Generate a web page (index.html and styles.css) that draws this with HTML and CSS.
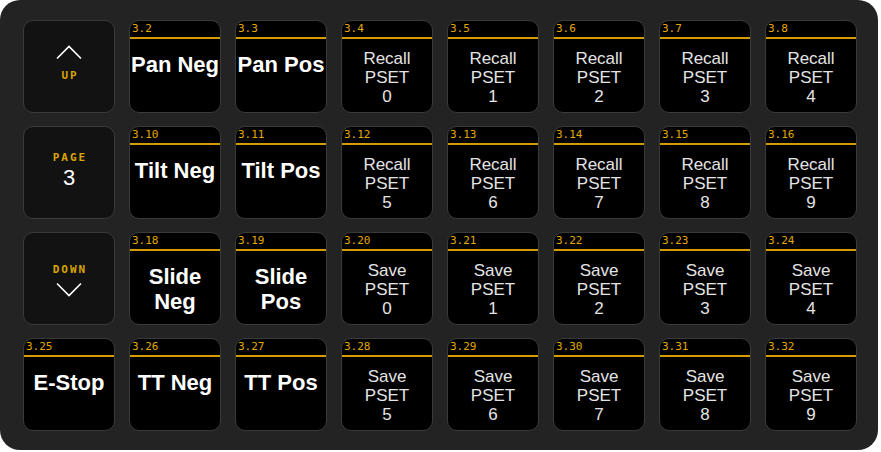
FILE: index.html
```html
<!DOCTYPE html>
<html>
<head>
<meta charset="utf-8">
<link rel="stylesheet" href="styles.css">
</head>
<body>
<div class="panel">
  <div class="key nav nav-up">
    <svg class="chev" width="26" height="15" viewBox="0 0 26 15"><polyline points="1,13.5 13,1.5 25,13.5" fill="none" stroke="#ffffff" stroke-width="1.6"/></svg>
    <span class="nav-label up-label">UP</span>
  </div>
  <div class="key"><div class="hdr">3.2</div><div class="body bold">Pan Neg</div></div>
  <div class="key"><div class="hdr">3.3</div><div class="body bold">Pan Pos</div></div>
  <div class="key"><div class="hdr">3.4</div><div class="body reg">Recall<br>PSET<br>0</div></div>
  <div class="key"><div class="hdr">3.5</div><div class="body reg">Recall<br>PSET<br>1</div></div>
  <div class="key"><div class="hdr">3.6</div><div class="body reg">Recall<br>PSET<br>2</div></div>
  <div class="key"><div class="hdr">3.7</div><div class="body reg">Recall<br>PSET<br>3</div></div>
  <div class="key"><div class="hdr">3.8</div><div class="body reg">Recall<br>PSET<br>4</div></div>

  <div class="key nav nav-page">
    <span class="nav-label">PAGE</span>
    <span class="page-num">3</span>
  </div>
  <div class="key"><div class="hdr">3.10</div><div class="body bold">Tilt Neg</div></div>
  <div class="key"><div class="hdr">3.11</div><div class="body bold">Tilt Pos</div></div>
  <div class="key"><div class="hdr">3.12</div><div class="body reg">Recall<br>PSET<br>5</div></div>
  <div class="key"><div class="hdr">3.13</div><div class="body reg">Recall<br>PSET<br>6</div></div>
  <div class="key"><div class="hdr">3.14</div><div class="body reg">Recall<br>PSET<br>7</div></div>
  <div class="key"><div class="hdr">3.15</div><div class="body reg">Recall<br>PSET<br>8</div></div>
  <div class="key"><div class="hdr">3.16</div><div class="body reg">Recall<br>PSET<br>9</div></div>

  <div class="key nav nav-down">
    <span class="nav-label">DOWN</span>
    <svg class="chev down-chev" width="26" height="15" viewBox="0 0 26 15"><polyline points="1,1.5 13,13.5 25,1.5" fill="none" stroke="#ffffff" stroke-width="1.6"/></svg>
  </div>
  <div class="key"><div class="hdr">3.18</div><div class="body bold">Slide<br>Neg</div></div>
  <div class="key"><div class="hdr">3.19</div><div class="body bold">Slide<br>Pos</div></div>
  <div class="key"><div class="hdr">3.20</div><div class="body reg">Save<br>PSET<br>0</div></div>
  <div class="key"><div class="hdr">3.21</div><div class="body reg">Save<br>PSET<br>1</div></div>
  <div class="key"><div class="hdr">3.22</div><div class="body reg">Save<br>PSET<br>2</div></div>
  <div class="key"><div class="hdr">3.23</div><div class="body reg">Save<br>PSET<br>3</div></div>
  <div class="key"><div class="hdr">3.24</div><div class="body reg">Save<br>PSET<br>4</div></div>

  <div class="key"><div class="hdr">3.25</div><div class="body bold">E-Stop</div></div>
  <div class="key"><div class="hdr">3.26</div><div class="body bold">TT Neg</div></div>
  <div class="key"><div class="hdr">3.27</div><div class="body bold">TT Pos</div></div>
  <div class="key"><div class="hdr">3.28</div><div class="body reg">Save<br>PSET<br>5</div></div>
  <div class="key"><div class="hdr">3.29</div><div class="body reg">Save<br>PSET<br>6</div></div>
  <div class="key"><div class="hdr">3.30</div><div class="body reg">Save<br>PSET<br>7</div></div>
  <div class="key"><div class="hdr">3.31</div><div class="body reg">Save<br>PSET<br>8</div></div>
  <div class="key"><div class="hdr">3.32</div><div class="body reg">Save<br>PSET<br>9</div></div>
</div>
</body>
</html>
```
FILE: styles.css
```css
html, body {
  margin: 0;
  padding: 0;
  background: #ffffff;
}
.panel {
  box-sizing: border-box;
  width: 878px;
  height: 450px;
  background: #232323;
  border-radius: 20px;
  padding: 20px 0 0 23px;
  display: grid;
  grid-template-columns: repeat(8, 92px);
  grid-template-rows: repeat(4, 93px);
  column-gap: 14px;
  row-gap: 13px;
  align-content: start;
}
.key {
  box-sizing: border-box;
  width: 92px;
  height: 93px;
  border: 1px solid #3a3a3a;
  border-radius: 10px;
  background: #000000;
  overflow: hidden;
  font-family: "Liberation Sans", Arial, sans-serif;
}
.hdr {
  height: 16px;
  line-height: 16px;
  border-bottom: 2px solid #d39c00;
  padding-left: 2px;
  font-family: "DejaVu Sans Mono", monospace;
  font-size: 11px;
  color: #e2a800;
}
.body {
  text-align: center;
}
.bold {
  padding-top: 13px;
  font-size: 22px;
  line-height: 25px;
  font-weight: bold;
  color: #ffffff;
}
.reg {
  padding-top: 10px;
  font-size: 17px;
  line-height: 19px;
  color: #e4e4e4;
}
.nav {
  background: #121212;
  display: flex;
  flex-direction: column;
  align-items: center;
}
.nav-up { padding-top: 24px; }
.nav-page { padding-top: 25px; }
.nav-down { padding-top: 31px; }
.chev { display: block; }
.nav-label {
  display: block;
  font-family: "DejaVu Sans Mono", monospace;
  font-weight: bold;
  font-size: 11px;
  line-height: 11px;
  letter-spacing: 2px;
  padding-left: 2px;
  color: #d9a300;
}
.up-label { margin-top: 10px; }
.down-chev { margin-top: 7px; }
.page-num {
  display: block;
  margin-top: 4px;
  font-size: 22px;
  line-height: 22px;
  color: #ffffff;
}
```
